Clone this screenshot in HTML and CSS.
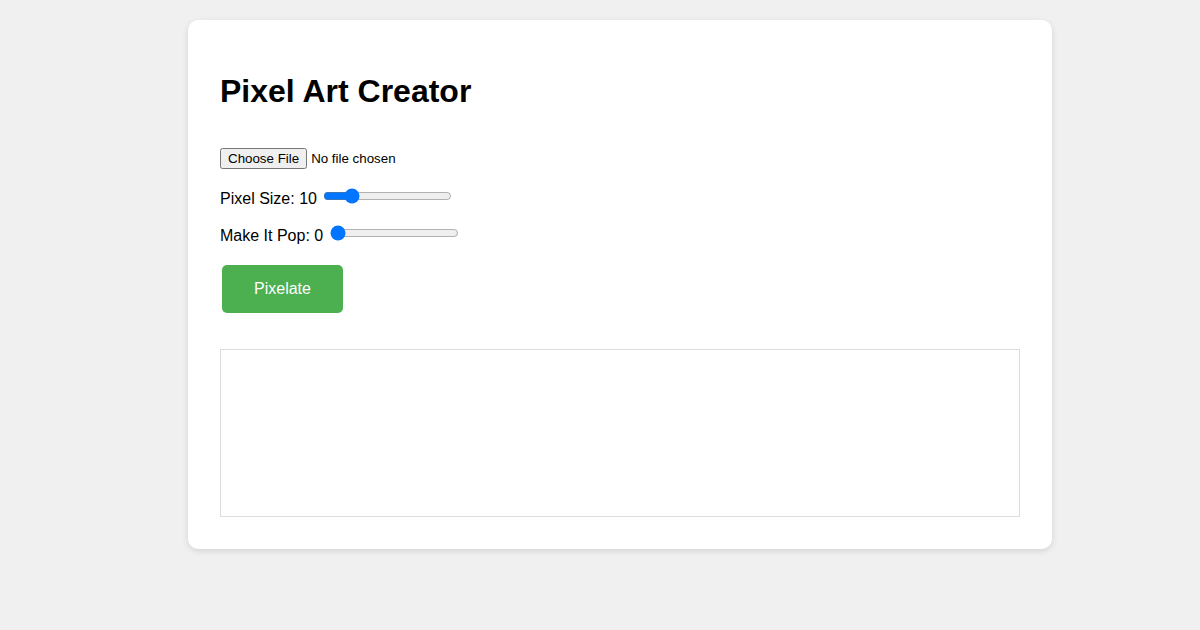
FILE: index.html
```html
<!DOCTYPE html>
<html>
<head>
<meta charset="utf-8">
<title>Pixel Art Creator</title>
<link rel="stylesheet" href="styles.css">
</head>
<body>
<div class="card">
  <h1 class="title">Pixel Art Creator</h1>
  <div class="controls">
    <div class="row row-file"><input type="file" accept="image/*"></div>
    <div class="row"><label>Pixel Size: <span>10</span></label> <input type="range" min="1" max="50" value="10"></div>
    <div class="row row-last"><label>Make It Pop: <span>0</span></label> <input type="range" min="0" max="100" value="0"></div>
    <button class="btn">Pixelate</button>
  </div>
  <div class="output"></div>
</div>
</body>
</html>
```

FILE: styles.css
```css
html, body {
  margin: 0;
  padding: 0;
}
body {
  background: #f0f0f0;
  font-family: "Liberation Sans", Arial, sans-serif;
  padding: 20px 0 20px 40px;
}
.card {
  width: 800px;
  margin: 0 auto;
  background: #fff;
  padding: 32px;
  border-radius: 10px;
  box-shadow: 0 2px 6px rgba(0,0,0,0.12);
}
.title {
  font-size: 32px;
  font-weight: bold;
  margin: 21.44px 0 0 0;
  color: #000;
}
.controls {
  margin-top: 37.6px;
}
.row {
  font-size: 16px;
  margin-bottom: 15px;
}
.row-file {
  margin-bottom: 16.5px;
}
.row-last {
  margin-bottom: 16.5px;
}
.btn {
  display: inline-block;
  background: #4caf50;
  color: #fff;
  border: none;
  border-radius: 5px;
  padding: 15px 32px;
  font-family: "Liberation Sans", Arial, sans-serif;
  font-size: 16px;
  margin: 4px 2px;
  cursor: pointer;
}
.output {
  margin-top: 32px;
  height: 168px;
  border: 1px solid #ddd;
  box-sizing: border-box;
}
```
